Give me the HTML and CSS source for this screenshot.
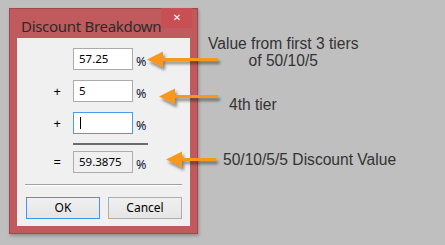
FILE: index.html
```html
<!DOCTYPE html>
<html>
<head>
<meta charset="utf-8">
<link rel="stylesheet" href="styles.css">
</head>
<body>
<div class="stage">
  <div class="dialog">
    <div class="titlebar">
      <span class="title">Discount Breakdown</span>
      <span class="close">&#x2715;</span>
    </div>
    <div class="client">
      <div class="row">
        <span class="sign"></span>
        <div class="field">57.25</div>
        <span class="pct">%</span>
      </div>
      <div class="row">
        <span class="sign">+</span>
        <div class="field">5</div>
        <span class="pct">%</span>
      </div>
      <div class="row">
        <span class="sign">+</span>
        <div class="field focused"><span class="caret"></span></div>
        <span class="pct">%</span>
      </div>
      <div class="sum-line"></div>
      <div class="row">
        <span class="sign">=</span>
        <div class="field readonly">59.3875</div>
        <span class="pct">%</span>
      </div>
      <div class="divider"></div>
      <div class="buttons">
        <div class="btn default">OK</div>
        <div class="btn">Cancel</div>
      </div>
    </div>
  </div>

  <svg class="arrows" width="445" height="245" viewBox="0 0 445 245">
    <defs>
      <filter id="sh" x="-20%" y="-50%" width="140%" height="220%">
        <feDropShadow dx="2" dy="3" stdDeviation="1.6" flood-color="#000" flood-opacity="0.45"/>
      </filter>
    </defs>
    <g fill="#f7981d" filter="url(#sh)">
      <path d="M147 59.5 L163 51.5 L163 58 L218 58 L218 61 L163 61 L163 67.5 Z"/>
      <path d="M159 96.5 L175 88.5 L175 95 L218 95 L218 98 L175 98 L175 104.5 Z"/>
      <path d="M166 159.5 L182 151.5 L182 158 L216 158 L216 161 L182 161 L182 167.5 Z"/>
    </g>
  </svg>

  <div class="note note1">Value from first 3 tiers<br>of 50/10/5</div>
  <div class="note note2">4th tier</div>
  <div class="note note3">50/10/5/5 Discount Value</div>
</div>
</body>
</html>
```

FILE: styles.css
```css
html, body {
  margin: 0;
  padding: 0;
  background: #bfbfbf;
}

.stage {
  position: relative;
  width: 445px;
  height: 245px;
  padding: 8px 0 0 9px;
  box-sizing: border-box;
  font-family: "Noto Sans", "Open Sans", sans-serif;
  overflow: hidden;
}

.dialog {
  width: 189px;
  height: 226px;
  box-sizing: border-box;
  background: #c05a5c;
  border: 1px solid #a14849;
  box-shadow: 1px 2px 3px rgba(0, 0, 0, 0.25);
  display: flex;
  flex-direction: column;
}

.titlebar {
  height: 29px;
  display: flex;
  align-items: flex-start;
  padding: 0 7px 0 11px;
}

.title {
  font-size: 15px;
  line-height: 20px;
  margin-top: 7px;
  color: #2b2b2b;
  letter-spacing: -0.3px;
  white-space: nowrap;
  flex: none;
}

.close {
  flex: none;
  margin-left: auto;
  margin-top: -1px;
  width: 31px;
  height: 20px;
  background: #c84f53;
  color: #ffffff;
  font-family: "DejaVu Sans", sans-serif;
  font-weight: bold;
  font-size: 10px;
  line-height: 20px;
  text-align: center;
}

.client {
  flex: 1;
  margin: 0 7px 7px 7px;
  background: #f0f0f0;
  padding: 10px 8px 0 8px;
  display: flex;
  flex-direction: column;
  font-size: 11.5px;
  color: #000;
}

.row {
  display: flex;
  align-items: flex-end;
  height: 22px;
  margin-bottom: 10px;
}

.sign {
  width: 36px;
  margin-right: 12px;
  text-align: right;
  font-size: 13px;
  line-height: 22px;
  align-self: center;
}

.field {
  width: 60px;
  height: 22px;
  box-sizing: border-box;
  border: 1px solid #ababab;
  background: #ffffff;
  padding: 0 5px;
  line-height: 20px;
  display: flex;
  align-items: center;
}

.field.focused {
  border-color: #4c9be8;
}

.field.readonly {
  background: #f0f0f0;
  border-color: #adadad;
}

.caret {
  width: 1px;
  height: 12px;
  background: #000;
  margin-left: 1px;
}

.pct {
  margin-left: 3px;
  font-size: 12.5px;
  line-height: 14px;
  margin-bottom: 1px;
  color: #10213a;
}

.sum-line {
  width: 75px;
  height: 2px;
  background: #6b6b6b;
  margin: -1px 0 6px 48px;
}

.divider {
  height: 1px;
  background: #a0a0a0;
  margin: 1px 0 11px 0;
  border-bottom: 1px solid #ffffff;
}

.buttons {
  display: flex;
  gap: 8px;
  padding-left: 1px;
}

.btn {
  width: 74px;
  height: 22px;
  box-sizing: border-box;
  border: 1px solid #adadad;
  background: linear-gradient(#f0f0f0, #e5e5e5);
  font-size: 12px;
  line-height: 20px;
  text-align: center;
  color: #000;
}

.btn.default {
  border-color: #3c97ef;
}

.arrows {
  position: absolute;
  left: 0;
  top: 0;
}

.note {
  position: absolute;
  font-family: "Liberation Sans", Arial, sans-serif;
  font-size: 15.6px;
  line-height: 17px;
  color: #333333;
  white-space: nowrap;
}

.note1 {
  left: 208px;
  top: 35px;
  text-align: center;
}

.note2 {
  left: 229px;
  top: 96px;
}

.note3 {
  left: 223px;
  top: 151px;
}
```
